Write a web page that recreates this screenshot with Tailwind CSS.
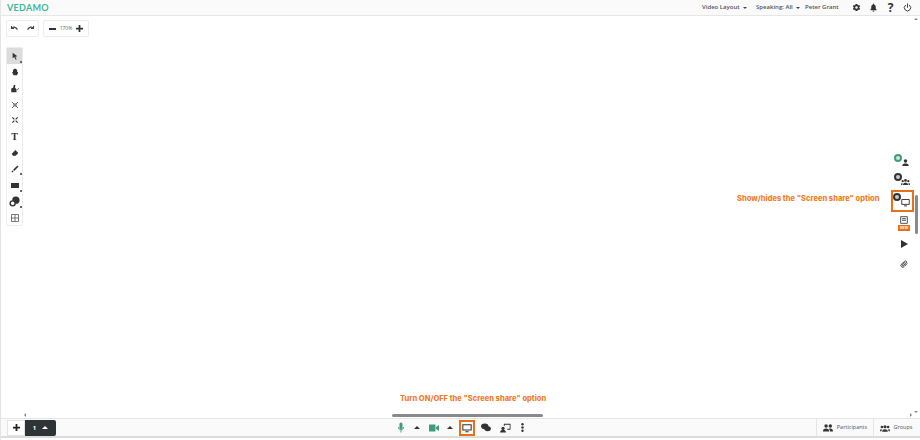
<!DOCTYPE html>
<html lang="en">
<head>
    <meta charset="UTF-8">
    <meta name="viewport" content="width=device-width, initial-scale=1.0">
    <title>Vedamo</title>
    <script src="https://cdn.jsdelivr.net/npm/@tailwindcss/browser@4"></script>
</head>
<body class="bg-white overflow-hidden font-['Open_Sans',sans-serif]">
    <div class="w-[920px] h-[440px] flex flex-col border-l border-[#e4e4e4]">
        <!-- top bar -->
        <header class="h-[16px] shrink-0 flex items-center bg-[#fafafa] border-b border-[#e6e6e6] pl-[6px] text-[#555]">
            <span class="text-[9px] font-bold tracking-[0.3px] text-[#3fb79a] leading-none font-['Lato',sans-serif] w-[695px]">VEDAMO</span>
            <span class="text-[6px] font-semibold flex items-center gap-[3px] w-[54px]">Video Layout <i class="w-0 h-0 border-x-[2px] border-x-transparent border-t-[2px] border-t-[#444]"></i></span>
            <span class="text-[6px] font-semibold flex items-center gap-[3px] w-[49px]">Speaking: All <i class="w-0 h-0 border-x-[2px] border-x-transparent border-t-[2px] border-t-[#444]"></i></span>
            <span class="text-[6px] font-semibold w-[47px]">Peter Grant</span>
            <div class="flex items-center gap-[8px] text-[#333]">
                <svg class="w-[9px] h-[9px]" viewBox="0 0 24 24" fill="#333"><path d="M19.4 13a7.5 7.5 0 0 0 0-2l2.3-1.8-2.3-4-2.7 1.1a7.5 7.5 0 0 0-1.7-1L14.6 2.5H9.4L9 5.3a7.5 7.5 0 0 0-1.7 1L4.6 5.2l-2.3 4L4.600 11a7.500 7.500 0 0 0 0 2l-2.300 1.800 2.300 4 2.700-1.100a7.500 7.500 0 0 0 1.700 1l.4 2.800h5.200l.4-2.800a7.500 7.500 0 0 0 1.700-1l2.700 1.100 2.300-4zM12 15.500a3.500 3.500 0 1 1 0-7 3.500 3.500 0 0 1 0 7z"/></svg>
                <svg class="w-[9px] h-[9px]" viewBox="0 0 24 24" fill="#333"><path d="M12 23a2.500 2.500 0 0 0 2.500-2.500h-5A2.500 2.500 0 0 0 12 23zm8-6-2-2.500V10a6 6 0 0 0-4.500-5.800V3a1.500 1.500 0 0 0-3 0v1.200A6 6 0 0 0 6 10v4.500L4 17v2h16z"/></svg>
                <span class="text-[12px] leading-none font-bold w-[9px] text-center">?</span>
                <svg class="w-[9px] h-[9px]" viewBox="0 0 24 24" fill="none" stroke="#333" stroke-width="2.500" stroke-linecap="round"><path d="M12 2.500v9"/><path d="M6.500 6a8.500 8.500 0 1 0 11 0"/></svg>
            </div>
        </header>

        <!-- canvas -->
        <main class="relative flex-1 bg-white">
            <!-- undo / zoom -->
            <div class="absolute left-[5px] top-[4px] flex gap-[4px]">
                <div class="h-[17px] w-[33px] flex items-center justify-center gap-[7px] border border-[#ececec] rounded-[2px] bg-white">
                    <svg class="w-[9px] h-[9px]" viewBox="0 0 24 24" fill="none" stroke="#444" stroke-width="3"><path d="M4 5v7h7"/><path d="M4.500 12C7 7 15 6 20 15"/></svg>
                    <svg class="w-[9px] h-[9px]" viewBox="0 0 24 24" fill="none" stroke="#444" stroke-width="3"><path d="M20 5v7h-7"/><path d="M19.500 12C17 7 9 6 4 15"/></svg>
                </div>
                <div class="h-[17px] w-[46px] flex items-center justify-center gap-[4px] border border-[#ececec] rounded-[2px] bg-white">
                    <i class="w-[7px] h-[2px] bg-[#333]"></i>
                    <span class="text-[5px] text-[#666] leading-none">170%</span>
                    <svg class="w-[7px] h-[7px]" viewBox="0 0 8 8" fill="#333"><path d="M3 0h2v3h3v2H5v3H3V5H0V3h3z"/></svg>
                </div>
            </div>

            <!-- drawing tools -->
            <div class="absolute left-[5px] top-[31px] w-[17px] h-[179px] flex flex-col items-center border border-[#ececec] rounded-[2px] bg-white">
                <div class="relative w-[15px] h-[16px] bg-[#dcdcdc] flex items-center justify-center">
                    <svg class="w-[8px] h-[8px]" viewBox="0 0 24 24" fill="#333"><path d="M5 2l14 11-6 1 4 8-3 1-4-8-5 4z"/></svg>
                    <i class="absolute right-0 bottom-[1px] w-[2px] h-[2px] bg-[#666]"></i>
                </div>
                <div class="h-[16px] flex items-center">
                    <svg class="w-[8px] h-[8px]" viewBox="0 0 24 24" fill="#333"><path d="M3 13l3-1V5h2.500V3H11V1.500h2.500V3H16v2h2.500v7H21v3l-3 7H8z"/></svg>
                </div>
                <div class="h-[17px] flex items-center">
                    <svg class="w-[10px] h-[9px]" viewBox="0 0 24 24" fill="#333"><path d="M2 22V12l5-2 2-8 4 1-1 7 4 3v9z"/><path d="M18 15l5-4" stroke="#333" stroke-width="2"/></svg>
                </div>
                <div class="h-[15px] flex items-center">
                    <svg class="w-[8px] h-[8px]" viewBox="0 0 24 24" fill="none" stroke="#444" stroke-width="2.500"><path d="M3 3l6 6v6l-6 6M21 3l-6 6v6l6 6M9 9h6M9 15h6"/></svg>
                </div>
                <div class="h-[16px] flex items-center">
                    <svg class="w-[8px] h-[8px]" viewBox="0 0 24 24" fill="none" stroke="#333" stroke-width="3.500"><path d="M4 4l6 6M20 4l-6 6M4 20l6-6M20 20l-6-6"/></svg>
                </div>
                <div class="h-[17px] flex items-center text-[10px] font-bold text-[#333] leading-none font-['Liberation_Serif',serif]">T</div>
                <div class="h-[16px] flex items-center">
                    <svg class="w-[8px] h-[8px]" viewBox="0 0 24 24" fill="#333"><path d="M13 3l9 9-8 8H6l-4-5z"/></svg>
                </div>
                <div class="relative w-[15px] h-[16px] flex items-center justify-center">
                    <svg class="w-[8px] h-[8px]" viewBox="0 0 24 24" fill="none" stroke="#333" stroke-width="5"><path d="M3 21l3-3M8 16L21 3"/></svg>
                    <i class="absolute right-0 bottom-[2px] w-[2px] h-[2px] bg-[#666]"></i>
                </div>
                <div class="relative w-[15px] h-[16px] flex items-center justify-center">
                    <i class="w-[8px] h-[5px] bg-[#333]"></i>
                    <i class="absolute right-0 bottom-[1px] w-[2px] h-[2px] bg-[#666]"></i>
                </div>
                <div class="relative w-[15px] h-[17px] flex items-center justify-center">
                    <svg class="w-[11px] h-[11px]" viewBox="0 0 24 24"><circle cx="15" cy="9" r="8" fill="#333"/><circle cx="8" cy="16" r="5.500" fill="#fff" stroke="#333" stroke-width="3"/></svg>
                    <i class="absolute right-0 bottom-[2px] w-[2px] h-[2px] bg-[#666]"></i>
                </div>
                <div class="h-[15px] flex items-center">
                    <svg class="w-[8px] h-[8px]" viewBox="0 0 8 8" fill="none" stroke="#555" stroke-width="0.800"><path d="M.5.5h7v7h-7zM4 .5v7M.5 4h7"/></svg>
                </div>
            </div>

            <!-- annotation: side panel -->
            <span class="absolute left-[736px] top-[177px] text-[7.500px] leading-[12px] font-extrabold text-[#f07d2a] font-['Inter',sans-serif] whitespace-nowrap">Show/hides the "Screen share" option</span>

            <!-- side panel icons -->
            <div class="absolute left-[890px] top-[134px] w-[23px] flex flex-col items-center">
                <div class="relative w-[23px] h-[19px]">
                    <i class="absolute left-[3px] top-[4px] w-[8px] h-[8px] rounded-full border-[2.500px] border-[#3f9e78] bg-[#cfe6dc]"></i>
                    <svg class="absolute left-[11px] top-[9px] w-[7px] h-[7px]" viewBox="0 0 24 24" fill="#333"><circle cx="12" cy="7" r="6"/><path d="M1 24c0-7 5-9 11-9s11 2 11 9z"/></svg>
                </div>
                <div class="relative w-[23px] h-[21px]">
                    <i class="absolute left-[3px] top-[4px] w-[8px] h-[8px] rounded-full border-[2.500px] border-[#333] bg-[#ccc]"></i>
                    <svg class="absolute left-[10px] top-[9px] w-[9px] h-[7px]" viewBox="0 0 32 24" fill="#333"><circle cx="16" cy="8" r="5"/><circle cx="6" cy="11" r="4"/><circle cx="26" cy="11" r="4"/><path d="M7 24c0-6 4-8 9-8s9 2 9 8zM0 24c0-5 2-7 5-7v7zM32 24c0-5-2-7-5-7v7z"/></svg>
                </div>
                <div class="relative w-[23px] h-[22px] border-2 border-[#e8701a]">
                    <i class="absolute left-0 top-[1px] w-[8px] h-[8px] rounded-full border-[2.500px] border-[#333] bg-[#ccc]"></i>
                    <svg class="absolute left-[8px] top-[6px] w-[9px] h-[9px]" viewBox="0 0 24 24" fill="none" stroke="#333" stroke-width="2.500"><path d="M2 4h20v13H2zM8 21h8"/></svg>
                </div>
                <div class="relative w-[23px] h-[24px] flex justify-center">
                    <svg class="ml-[3px] mt-[4px] w-[8px] h-[8px]" viewBox="0 0 24 24" fill="none" stroke="#333" stroke-width="2.500"><path d="M2 2h20v20H2zM6 8h12M6 13h12"/></svg>
                    <span class="absolute left-[7px] top-[13px] w-[12px] h-[6px] bg-[#e8701a] text-white text-[3.500px] font-bold leading-[6px] text-center">NEW</span>
                </div>
                <div class="h-[16px] ml-[3px] flex items-center">
                    <svg class="w-[7px] h-[8px]" viewBox="0 0 7 8" fill="#333"><path d="M0 0l7 4-7 4z"/></svg>
                </div>
                <div class="h-[24px] ml-[3px] flex items-center">
                    <svg class="w-[8px] h-[8px]" viewBox="0 0 24 24" fill="none" stroke="#444" stroke-width="3" stroke-linecap="round"><path d="M21 11l-9 9a5 5 0 0 1-8-7L14 4a3.500 3.500 0 0 1 5 5L10 17a1.500 1.500 0 0 1-3-2l8-8"/></svg>
                </div>
            </div>

            <!-- scrollbars -->
            <i class="absolute left-[914px] top-[179px] w-[3px] h-[39px] rounded-full bg-[#8a8a8a]"></i>
            <i class="absolute left-[913px] top-[2px] w-0 h-0 border-x-[2px] border-x-transparent border-b-[2px] border-b-[#888]"></i>
            <i class="absolute left-[913px] top-[395px] w-0 h-0 border-x-[2px] border-x-transparent border-t-[2px] border-t-[#888]"></i>
            <i class="absolute left-[23px] top-[397px] w-0 h-0 border-y-[2px] border-y-transparent border-r-[2px] border-r-[#888]"></i>
            <i class="absolute left-[909px] top-[397px] w-0 h-0 border-y-[2px] border-y-transparent border-l-[2px] border-l-[#888]"></i>
            <!-- annotation: bottom -->
            <span class="absolute left-[399px] top-[377px] text-[7.500px] leading-[12px] font-extrabold text-[#f07d2a] font-['Inter',sans-serif] whitespace-nowrap">Turn ON/OFF the "Screen share" option</span>
            <i class="absolute left-[391px] top-[398px] w-[151px] h-[3px] rounded-full bg-[#8a8a8a]"></i>
        </main>

        <!-- bottom bar -->
        <footer class="h-[18px] shrink-0 flex items-center bg-[#fafafa] border-t border-[#e6e6e6] pl-[6px]">
            <div class="h-[16px] w-[18px] flex items-center justify-center bg-white border border-[#e4e4e4]">
                <svg class="w-[7px] h-[7px]" viewBox="0 0 8 8" fill="#222"><path d="M3 0h2v3h3v2H5v3H3V5H0V3h3z"/></svg>
            </div>
            <div class="h-[16px] w-[31px] flex items-center justify-center gap-[6px] bg-[#2e3436] rounded-r-[2px] text-white">
                <span class="text-[6px] font-bold leading-none">1</span>
                <i class="w-0 h-0 border-x-[3px] border-x-transparent border-b-[3px] border-b-white"></i>
            </div>
            <div class="ml-[341px] flex items-center">
                <svg class="w-[8px] h-[11px]" viewBox="0 0 16 22" fill="#3f9e78"><rect x="5" y="1" width="6" height="13" rx="3"/><path d="M2 10c0 4 3 6 6 6s6-2 6-6h-2c0 3-2 4-4 4s-4-1-4-4zM7 16h2v5H7z"/></svg>
                <i class="ml-[9px] w-0 h-0 border-x-[3px] border-x-transparent border-b-[3px] border-b-[#333]"></i>
                <svg class="ml-[9px] w-[10px] h-[8px]" viewBox="0 0 20 16" fill="#3f9e78"><rect y="1" width="13" height="14" rx="1"/><path d="M14 6l6-4v12l-6-4z"/></svg>
                <i class="ml-[8px] w-0 h-0 border-x-[3px] border-x-transparent border-b-[3px] border-b-[#333]"></i>
                <div class="ml-[6px] w-[16px] h-[16px] flex items-center justify-center border-2 border-[#e8701a]">
                    <svg class="w-[10px] h-[10px]" viewBox="0 0 24 24" fill="none" stroke="#333" stroke-width="2.500"><path d="M2 4h20v13H2zM8 21h8"/></svg>
                </div>
                <svg class="ml-[6px] w-[10px] h-[9px]" viewBox="0 0 24 22" fill="#333"><ellipse cx="9" cy="8" rx="9" ry="7"/><ellipse cx="16" cy="14" rx="8" ry="6"/></svg>
                <svg class="ml-[9px] w-[11px] h-[10px]" viewBox="0 0 26 24" fill="#333"><path d="M9 2h16v14h-8v-2h6V4H11v3H9z" /><circle cx="7" cy="13" r="4"/><path d="M0 23c0-5 3-6 7-6s7 1 7 6z"/></svg>
                <svg class="ml-[10px] w-[3px] h-[9px]" viewBox="0 0 3 9" fill="#333"><circle cx="1.500" cy="1.200" r="1.200"/><circle cx="1.500" cy="4.500" r="1.200"/><circle cx="1.500" cy="7.800" r="1.200"/></svg>
            </div>
            <div class="ml-auto flex items-center h-full pr-[2px]">
                <div class="w-[57px] h-full flex items-center justify-center gap-[4px] border-l border-[#e6e6e6]">
                    <svg class="w-[10px] h-[8px]" viewBox="0 0 26 20" fill="#333"><circle cx="8" cy="5" r="4.500"/><circle cx="19" cy="5" r="4.500"/><path d="M0 19c0-6 3-8 8-8s8 2 8 8zM18 19c0-3-1-6-3-7 1-1 3-1 4-1 4 0 7 2 7 8z"/></svg>
                    <span class="text-[5.500px] text-[#555] leading-none">Participants</span>
                </div>
                <div class="w-[45px] h-full flex items-center justify-center gap-[4px] border-l border-[#e6e6e6]">
                    <svg class="w-[10px] h-[8px]" viewBox="0 0 32 24" fill="#333"><circle cx="16" cy="8" r="5"/><circle cx="6" cy="9" r="4"/><circle cx="26" cy="9" r="4"/><path d="M7 24c0-6 4-8 9-8s9 2 9 8zM0 22c0-5 2-7 5-7v7zM32 22c0-5-2-7-5-7v7z"/></svg>
                    <span class="text-[5.500px] text-[#555] leading-none">Groups</span>
                </div>
            </div>
        </footer>
        <div class="h-[2px] shrink-0 bg-[#dcdcdc]"></div>
        <div class="h-[2px] shrink-0 bg-white"></div>
    </div>
</body>
</html>
